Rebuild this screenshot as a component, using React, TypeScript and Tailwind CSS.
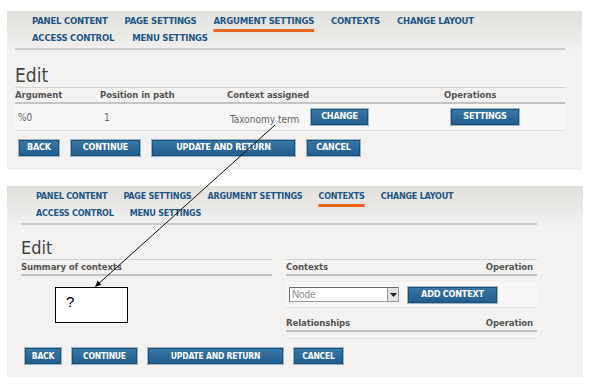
import React from "react";

const F = "font-['DejaVu_Sans_Condensed','DejaVu_Sans',sans-serif]";

function Btn({ w, label, size = "text-[9px]" }: { w: string; label: string; size?: string }) {
  return (
    <div
      className={`${w} h-[18px] flex items-center justify-center border border-[#9db3c6] bg-[linear-gradient(#3a78a8,#205d8c)] shadow-[inset_0_0_0_1px_#1b527c] text-white font-bold ${size} ${F} tracking-[-0.2px]`}
    >
      {label}
    </div>
  );
}

function Tab({ label, active }: { label: string; active?: boolean }) {
  return (
    <span
      className={
        active
          ? "underline decoration-[#e8661e] decoration-[3px] underline-offset-[5px]"
          : ""
      }
    >
      {label}
    </span>
  );
}

export default function App() {
  return (
    <div className="relative w-[616px] h-[385px] bg-white overflow-hidden">
      {/* Panel 1 */}
      <div className="ml-[7px] mt-[11px] w-[575px] h-[159px] bg-[linear-gradient(#e2e0dc,#f3f2f1_42px)] pl-[8px] pr-[17px]">
        <div className={`pl-[17px] pt-[1px] text-[9.5px] tracking-[-0.25px] font-bold text-[#1e5887] ${F}`}>
          <div className="h-[17px] leading-[17px] flex gap-[17px]">
            <Tab label="PANEL CONTENT" />
            <Tab label="PAGE SETTINGS" />
            <Tab label="ARGUMENT SETTINGS" active />
            <Tab label="CONTEXTS" />
            <Tab label="CHANGE LAYOUT" />
          </div>
          <div className="h-[17px] leading-[17px] flex gap-[18px]">
            <Tab label="ACCESS CONTROL" />
            <Tab label="MENU SETTINGS" />
          </div>
        </div>
        <div className="mt-[2px] h-[2px] bg-[#cdcdcd]" />
        <div className="h-[37px] flex items-end pb-[2px]">
          <div className={`text-[19px] leading-[20px] text-[#444] ${F}`}>Edit</div>
        </div>
        <div className="h-[1px] bg-[#d3d3d3]" />
        <div className={`h-[14px] grid grid-cols-[85px_127px_217px_1fr] items-center text-[9.5px] tracking-[-0.1px] font-bold text-[#555] ${F}`}>
          <div>Argument</div>
          <div>Position in path</div>
          <div>Context assigned</div>
          <div>Operations</div>
        </div>
        <div className="h-[2px] bg-[#c4c4c4]" />
        <div className={`h-[26px] grid grid-cols-[85px_127px_217px_1fr] items-center bg-[#f8f7f7] text-[10px] text-[#666] ${F}`}>
          <div className="pl-[3px]">%0</div>
          <div className="pl-[4px]">1</div>
          <div className="flex items-center pl-[3px]">
            <span className="w-[80px] mt-[4px]">Taxonomy term</span>
            <Btn w="w-[59px]" label="CHANGE" />
          </div>
          <div className="pl-[6px]">
            <Btn w="w-[70px]" label="SETTINGS" />
          </div>
        </div>
        <div className="h-[1px] bg-[#dcdcdc]" />
        <div className="mt-[8px] pl-[3px] flex gap-[10px]">
          <Btn w="w-[42px]" label="BACK" />
          <Btn w="w-[71px]" label="CONTINUE" />
          <Btn w="w-[145px]" label="UPDATE AND RETURN" />
          <Btn w="w-[55px]" label="CANCEL" />
        </div>
      </div>

      {/* Panel 2 */}
      <div className="ml-[7px] mt-[16px] w-[576px] h-[191px] bg-[linear-gradient(#e2e0dc,#f3f2f1_42px)] pl-[14px] pr-[46px]">
        <div className={`pl-[15px] pt-[2px] text-[9px] tracking-[-0.25px] font-bold text-[#1e5887] ${F}`}>
          <div className="h-[17px] leading-[17px] flex gap-[16px]">
            <Tab label="PANEL CONTENT" />
            <Tab label="PAGE SETTINGS" />
            <Tab label="ARGUMENT SETTINGS" />
            <Tab label="CONTEXTS" active />
            <Tab label="CHANGE LAYOUT" />
          </div>
          <div className="h-[17px] leading-[17px] flex gap-[16px]">
            <Tab label="ACCESS CONTROL" />
            <Tab label="MENU SETTINGS" />
          </div>
        </div>
        <div className="mt-[1px] h-[2px] bg-[#cdcdcd]" />
        <div className="h-[34px] flex items-end pb-[1px]">
          <div className={`text-[18px] leading-[20px] text-[#444] ${F}`}>Edit</div>
        </div>
        <div className={`flex gap-[14px] text-[9.5px] tracking-[-0.1px] font-bold text-[#555] ${F}`}>
          <div className="w-[251px]">
            <div className="h-[1px] bg-[#d3d3d3]" />
            <div className="h-[14px] flex items-center">Summary of contexts</div>
            <div className="h-[2px] bg-[#c4c4c4]" />
          </div>
          <div className="flex-1">
            <div className="h-[1px] bg-[#d3d3d3]" />
            <div className="h-[14px] flex items-center justify-between pr-[4px]">
              <span>Contexts</span>
              <span>Operation</span>
            </div>
            <div className="h-[2px] bg-[#c4c4c4]" />
            <div className="mt-[6px] h-[25px] flex items-center bg-[#f8f7f7] pl-[3px] gap-[8px]">
              <div className="w-[110px] h-[15px] flex items-center bg-white border border-[#9a9a9a] border-t-[#6b6b6b] border-l-[#6b6b6b]">
                <span className="flex-1 pl-[2px] text-[10px] font-normal text-[#8a8a8a] font-['Liberation_Sans',Arial,sans-serif] leading-[13px]">
                  Node
                </span>
                <span className="w-[11px] h-[13px] flex items-center justify-center bg-[#e4e4e4] border-l border-[#9a9a9a]">
                  <svg width="7" height="4" viewBox="0 0 7 4">
                    <path d="M0 0h7L3.5 4z" fill="#222" />
                  </svg>
                </span>
              </div>
              <Btn w="w-[91px]" label="ADD CONTEXT" />
            </div>
            <div className="h-[1px] bg-[#dcdcdc]" />
            <div className="h-[22px] pt-[8px] flex items-center justify-between pr-[4px]">
              <span>Relationships</span>
              <span>Operation</span>
            </div>
            <div className="h-[2px] bg-[#c4c4c4]" />
            <div className="mt-[6px] h-[1px] bg-[#e0e0e0]" />
          </div>
        </div>
        <div className="mt-[8px] pl-[3px] flex gap-[9px]">
          <Btn w="w-[38px]" label="BACK" size="text-[8.5px]" />
          <Btn w="w-[67px]" label="CONTINUE" size="text-[8.5px]" />
          <Btn w="w-[137px]" label="UPDATE AND RETURN" size="text-[8.5px]" />
          <Btn w="w-[51px]" label="CANCEL" size="text-[8.5px]" />
        </div>
      </div>

      {/* Annotation overlay */}
      <div className="absolute left-[55px] top-[287px] w-[73px] h-[36px] bg-white border border-black">
        <span className="absolute left-[10px] top-[5px] text-[15px] leading-[18px] text-black font-['Liberation_Sans',Arial,sans-serif]">
          ?
        </span>
      </div>
      <svg className="absolute left-0 top-0 pointer-events-none" width="616" height="385" viewBox="0 0 616 385">
        <line x1="275" y1="125" x2="96" y2="286" stroke="#111" strokeWidth="1" />
        <path d="M95 287L101.5 284.8L97.6 280.5Z" fill="#111" />
      </svg>
    </div>
  );
}
